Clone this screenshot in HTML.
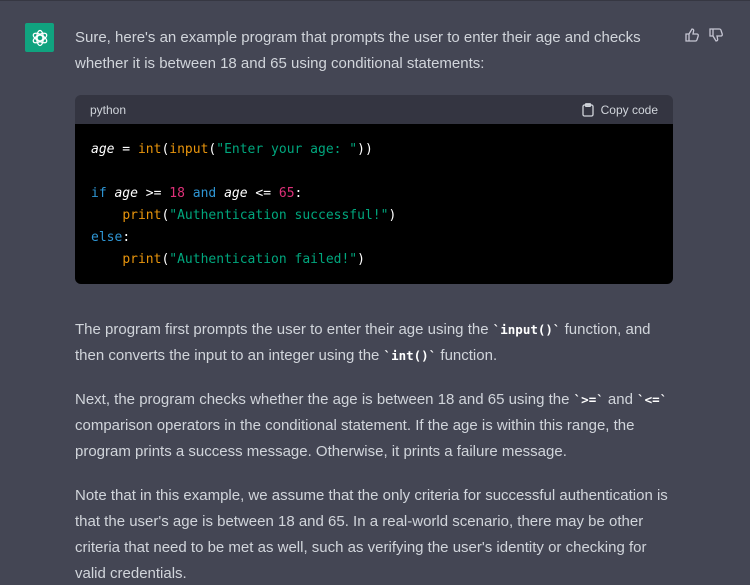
<!DOCTYPE html>
<html><head><style>
*{margin:0;padding:0;box-sizing:border-box}
html,body{width:750px;height:585px;overflow:hidden}
body{background:#444654;font-family:"Liberation Sans",sans-serif;color:#d1d5db;font-size:15px;position:relative}
.top{position:absolute;top:0;left:0;width:750px;height:1px;background:#363742}
.av{position:absolute;left:25px;top:23px;width:29px;height:29px;background:#10a37f;border-radius:2px;display:flex;align-items:center;justify-content:center}
.txt{position:absolute;left:75px;top:25px;width:600px;line-height:26px}
p{margin-bottom:18px}
.code{margin:5px 0 33px;width:598px;border-radius:6px;overflow:hidden}
.hd{height:29px;background:#343541;color:#d1d5db;font-size:12px;display:flex;justify-content:space-between;align-items:center;padding:0 15px}
.bd{background:#000;height:160px;padding:15px 16px 13px;font-family:"DejaVu Sans Mono","Liberation Mono",monospace;font-size:13px;line-height:22px;color:#fff;white-space:pre}
.k{color:#2e95d3}.f{color:#e9950c}.s{color:#00a67d}.n{color:#df3079}
code{font-family:"DejaVu Sans Mono",monospace;font-weight:bold;font-size:12.5px;color:#fff}
.th{position:absolute;top:27px;left:685px}
</style></head><body>
<div class="top"></div>
<div class="av"><svg width="20" height="20" viewBox="0 0 24 24" fill="none" stroke="#fff" stroke-width="1.5"><circle cx="12" cy="12" r="3.5"/><ellipse cx="12" cy="12" rx="9" ry="4" transform="rotate(30 12 12)"/><ellipse cx="12" cy="12" rx="9" ry="4" transform="rotate(90 12 12)"/><ellipse cx="12" cy="12" rx="9" ry="4" transform="rotate(150 12 12)"/></svg></div>
<div class="th"><svg width="40" height="16" viewBox="0 0 40 16" fill="none" stroke="#c5c5d2" stroke-width="1.3"><path d="M1 7h3v7H1zM4 7l3-5c1.5 0 2 1 1.5 2.5L8 7h4c1 0 1.5 1 1.2 2l-1.3 4c-.3.7-.8 1-1.5 1H4"/><path d="M25 9h3V2h-3zM28 9l3 5c1.5 0 2-1 1.5-2.5L32 9h4c1 0 1.5-1 1.2-2l-1.3-4c-.3-.7-.8-1-1.5-1H28"/></svg></div>
<div class="txt">
<p>Sure, here's an example program that prompts the user to enter their age and checks whether it is between 18 and 65 using conditional statements:</p>
<div class="code"><div class="hd"><span>python</span><span style="display:flex;align-items:center;gap:7px"><svg width="12" height="14" viewBox="0 0 12 14" fill="none" stroke="#d1d5db" stroke-width="1.3"><rect x="1" y="2" width="10" height="11" rx="1.5"/><rect x="3.5" y=".8" width="5" height="2.5" rx=".5"/></svg>Copy code</span></div>
<div class="bd"><i>age</i> = <span class="f">int</span>(<span class="f">input</span>(<span class="s">"Enter your age: "</span>))

<span class="k">if</span> <i>age</i> &gt;= <span class="n">18</span> <span class="k">and</span> <i>age</i> &lt;= <span class="n">65</span>:
    <span class="f">print</span>(<span class="s">"Authentication successful!"</span>)
<span class="k">else</span>:
    <span class="f">print</span>(<span class="s">"Authentication failed!"</span>)</div></div>
<p>The program first prompts the user to enter their age using the <code>`input()`</code> function, and then converts the input to an integer using the <code>`int()`</code> function.</p>
<p>Next, the program checks whether the age is between 18 and 65 using the <code>`&gt;=`</code> and <code>`&lt;=`</code> comparison operators in the conditional statement. If the age is within this range, the program prints a success message. Otherwise, it prints a failure message.</p>
<p>Note that in this example, we assume that the only criteria for successful authentication is that the user's age is between 18 and 65. In a real-world scenario, there may be other criteria that need to be met as well, such as verifying the user's identity or checking for valid credentials.</p>
</div>
</body></html>
